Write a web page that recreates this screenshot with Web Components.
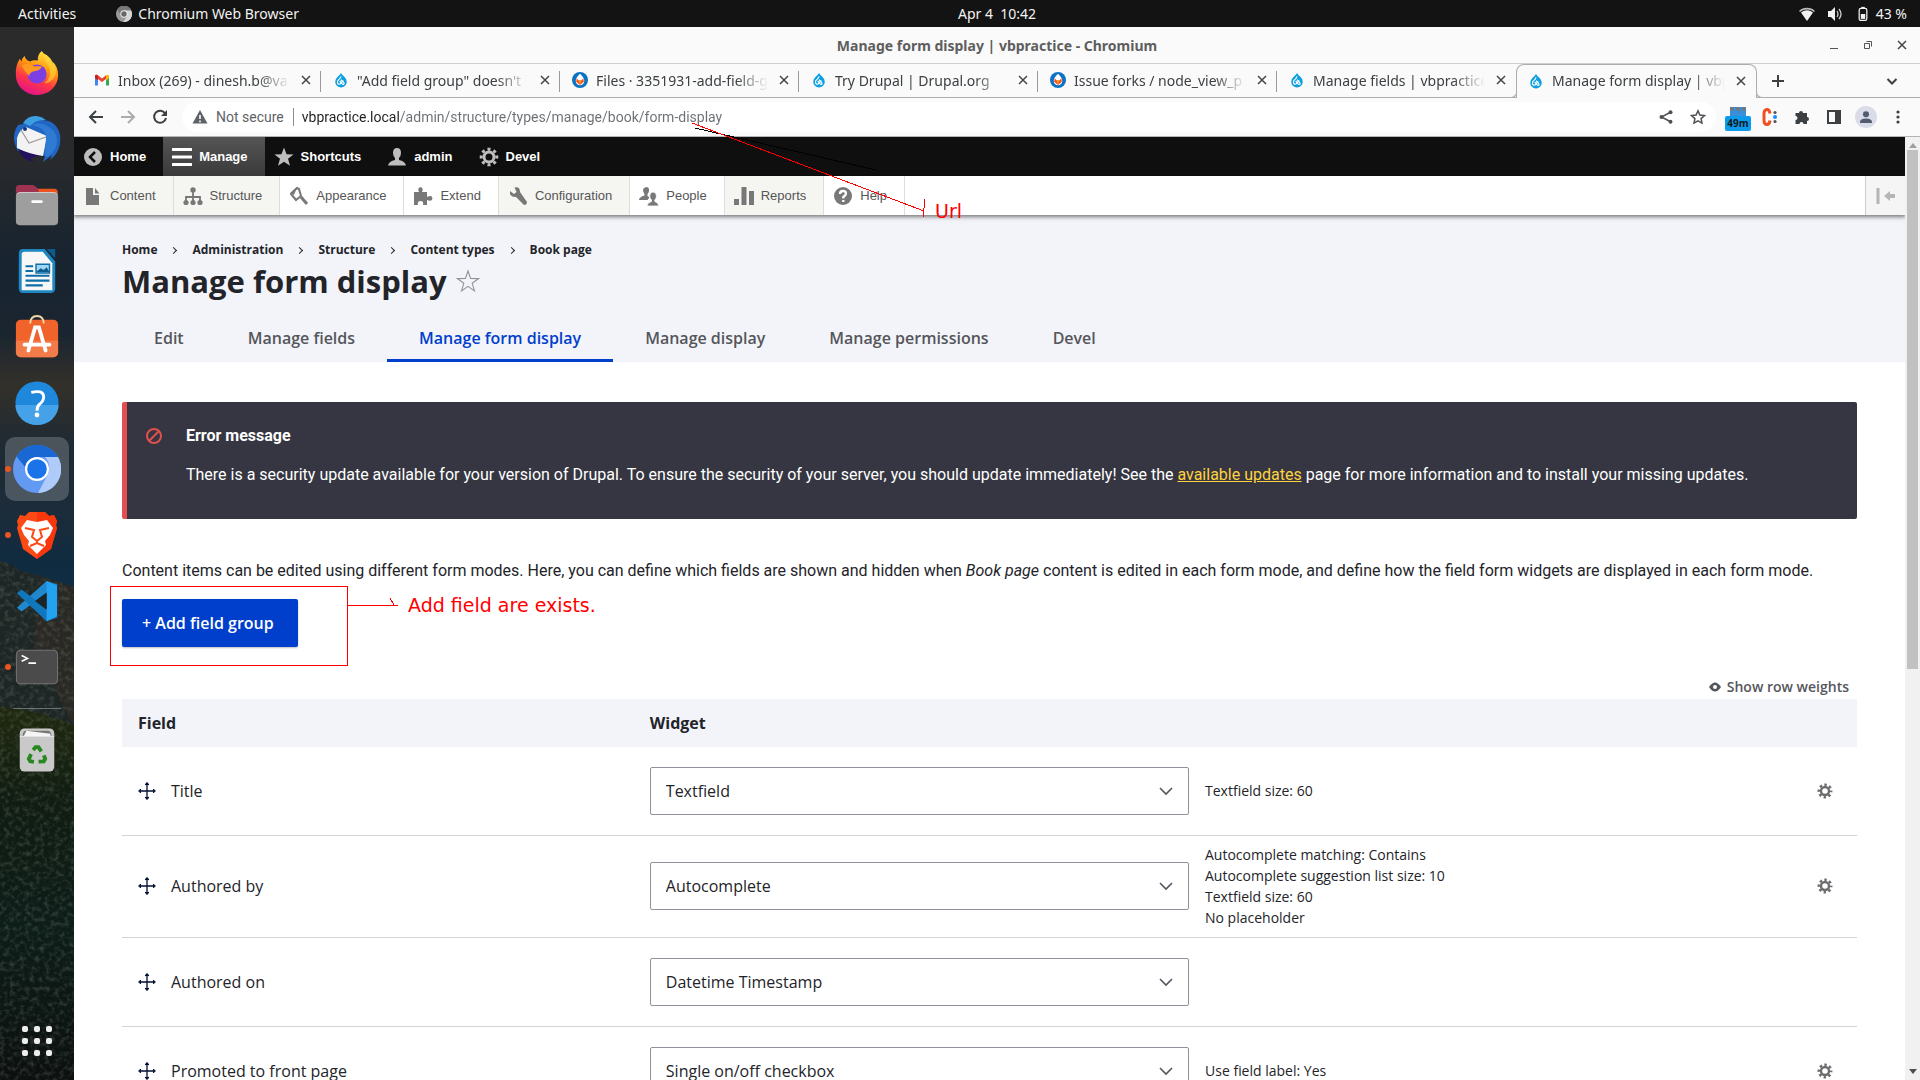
<!DOCTYPE html>
<html lang="en">
<head>
<meta charset="utf-8">
<title>Manage form display | vbpractice</title>
<style>
  html, body {
    margin: 0;
    height: 100%;
    overflow: hidden;
  }

  body {
    --ui-font: "Noto Sans", sans-serif;
    --prose-font: Roboto, "Noto Sans", sans-serif;

    font-family: "Open Sans", "Noto Sans", sans-serif;
    font-size: 16px;
    color: #232429;
  }
</style>
</head>
<body>
<desktop-shell>
  <top-bar slot="top"></top-bar>
  <app-dock slot="dock"></app-dock>
  <browser-window>
    <browser-tab slot="tabs" icon="gmail">Inbox (269) - dinesh.b@va</browser-tab>
    <browser-tab slot="tabs" icon="drupal">"Add field group" doesn't</browser-tab>
    <browser-tab slot="tabs" icon="gitlab">Files · 3351931-add-field-g</browser-tab>
    <browser-tab slot="tabs" icon="drupal">Try Drupal | Drupal.org</browser-tab>
    <browser-tab slot="tabs" icon="gitlab">Issue forks / node_view_p</browser-tab>
    <browser-tab slot="tabs" icon="drupal" last>Manage fields | vbpractice</browser-tab>
    <browser-tab slot="tabs" icon="drupal" active>Manage form display | vbp</browser-tab>

    <admin-toolbar></admin-toolbar>
    <page-header heading="Manage form display"></page-header>
    <page-content>
      <status-message heading="Error message">
        There is a security update available for your version of Drupal. To ensure the security of your server, you should update immediately! See the <a href="#updates">available updates</a> page for more information and to install your missing updates.
      </status-message>
      <p>Content items can be edited using different form modes. Here, you can define which fields are shown and hidden when <em>Book page</em> content is edited in each form mode, and define how the field form widgets are displayed in each form mode.</p>
      <action-button>+ Add field group</action-button>
      <field-table></field-table>
    </page-content>
  </browser-window>
  <markup-layer slot="overlay"></markup-layer>
</desktop-shell>

<script>
const icons = {
  chromeGrey: ['0 0 24 24', '<circle cx="12" cy="12" r="12" fill="#9a9a9a"/><path d="M12 6h11A12 12 0 0 0 2 5l5 9z" fill="#777"/><path d="M23 7H12l5 8-6 9A12 12 0 0 0 23 7" fill="#d5d5d5"/><circle cx="12" cy="12" r="5.5" fill="#eee"/><circle cx="12" cy="12" r="4" fill="#666"/>'],
  wifi: ['0 0 16 16', '<path d="M0 5C4 .8 12 .8 16 5l-1 1C11 2.700 5 2.700 1 6z" fill="#bbb"/><path d="M2 6.500Q8 2 14 6.500L8 15z" fill="#f2f2f2"/>'],
  volume: ['0 0 16 16', '<path d="M1 5h3l4-4v14l-4-4H1z" fill="#f2f2f2"/><path d="M10 5q2 3 0 6M12 3q4 5 0 10" fill="none" stroke="#ccc" stroke-width="1.300"/>'],
  battery: ['0 0 12 18', '<path d="M4 1h4v2H4z" fill="#f2f2f2"/><rect x="1.700" y="2.700" width="8.600" height="13.600" rx="2" fill="none" stroke="#f2f2f2" stroke-width="1.400"/><path d="M3.500 9h5v5.500h-5z" fill="#f2f2f2"/>'],

  minimize: ['0 0 12 12', '<path d="M2 9.500h8" stroke="#555"/>'],
  restore: ['0 0 12 12', '<path d="M2.500 4.500h5v5h-5zM4.500 2.500h5v5" fill="none" stroke="#555"/>'],
  close: ['0 0 12 12', '<path d="M2 2l8 8M10 2l-8 8" stroke="#444" stroke-width="1.500"/>'],
  plus: ['0 0 14 14', '<path d="M7 1v12M1 7h12" stroke="#3c4043" stroke-width="2"/>'],
  tabDown: ['0 0 14 14', '<path d="M2.500 5L7 9.500 11.500 5" fill="none" stroke="#3c4043" stroke-width="2"/>'],
  back: ['0 0 16 16', '<path d="M15 8H2M8 2L2 8l6 6" fill="none" stroke="#3c4043" stroke-width="2"/>'],
  forward: ['0 0 16 16', '<path d="M1 8h13M8 2l6 6-6 6" fill="none" stroke="#aaacae" stroke-width="2"/>'],
  reload: ['0 0 16 16', '<path d="M13.200 4.500A6 6 0 1 0 14 9" fill="none" stroke="#3c4043" stroke-width="2"/><path d="M15 1v6H9z" fill="#3c4043"/>'],
  warning: ['0 0 16 16', '<path d="M8 1l7.500 13.500H.5z" fill="#5f6368"/><path d="M8 6v4M8 11.500v1.700" stroke="#fff" stroke-width="1.600"/>'],
  share: ['0 0 16 16', '<path d="M13 3L3.500 8l9.500 5" fill="none" stroke="#4d5156" stroke-width="1.500"/><circle cx="12.500" cy="3.200" r="2" fill="#4d5156"/><circle cx="3.500" cy="8" r="2" fill="#4d5156"/><circle cx="12.500" cy="12.800" r="2" fill="#4d5156"/>'],
  bookmark: ['0 0 16 16', '<path d="M8 1.800l1.900 4.200 4.600.5-3.400 3.100.9 4.500L8 11.800l-4 2.300.9-4.500-3.400-3.100 4.600-.5z" fill="none" stroke="#4d5156" stroke-width="1.500"/>'],
  crx: ['0 0 16 18', '<path d="M8 5.500Q7.500 1.500 5 1.500 2 1.500 2 6v6q0 4.500 3 4.500 2.500 0 3-4" fill="none" stroke="#f04e23" stroke-width="3"/><g fill="#555"><circle cx="13" cy="4.500" r="1.600"/><circle cx="13" cy="13.500" r="1.600"/></g><circle cx="13" cy="9" r="2" fill="#1a8cff"/>'],
  puzzle: ['0 0 16 16', '<path d="M1.500 4H5a2 2 0 1 1 4 0h4v4a2 2 0 1 1 0 4v3H9.500a2 2 0 1 0-4 0h-4v-4a2 2 0 1 0 0-4z" fill="#3c4043"/>'],
  sidePanel: ['0 0 16 16', '<path d="M2 2h12v12H2z" fill="none" stroke="#3c4043" stroke-width="2"/><path d="M9 2h5v12H9z" fill="#3c4043"/>'],
  avatar: ['0 0 24 24', '<circle cx="12" cy="12" r="12" fill="#dadce8"/><circle cx="12" cy="9" r="3.300" fill="#535b70"/><path d="M5.500 18.500v-1.500q0-3 6.500-3.500 6.500.5 6.500 3.500v1.500z" fill="#535b70"/>'],
  kebab: ['0 0 16 16', '<g fill="#3c4043"><circle cx="8" cy="3" r="1.600"/><circle cx="8" cy="8" r="1.600"/><circle cx="8" cy="13" r="1.600"/></g>'],

  gmail: ['0 0 16 16', '<path d="M1 3.500v10h3V6z" fill="#4285f4"/><path d="M15 3.500v10h-3V6z" fill="#34a853"/><path d="M1 6V3.500Q2 2 4 3.300L8 6.500l4-3.200V7L8 10 4 7v1z" fill="#ea4335"/><path d="M12 3.300Q14 2 15 3.500V6l-3 2.500z" fill="#fbbc04"/><path d="M1 3.500Q1.500 2.500 3 2.800L4 3.500v5L1 6z" fill="#c5221f"/>'],
  drupal: ['0 0 16 18', '<path d="M8 1q1 2 3.500 4.200Q14.500 8 14.500 11a6.500 6.500 0 0 1-13 0Q1.500 8 4.500 5.200 7 3 8 1z" fill="#0c9fe2"/><path d="M8 5q-.5 1.800-2 3-2 1.500-2 3.300 0 2.500 2 2.500.9 0 2-1.500l2.500-3M8 8.500l3 3.300q1 1.300 0 2-1 .5-2-.7L6.500 10" fill="none" stroke="#fff" stroke-width="1.300"/>'],
  gitlab: ['0 0 18 18', '<circle cx="9" cy="9" r="9" fill="#0b72c4"/><path d="M9 2q4.800 4.500 4.800 8a4.800 5 0 0 1-9.600 0Q4.200 6.500 9 2z" fill="#fff"/><path d="M5.300 7l1.700 2h4l1.700-2 .6 4L9 14.500 4.700 11z" fill="#f4511e"/><path d="M7 9h4l-2 5z" fill="#ff9b2e"/>'],

  home: ['0 0 20 20', '<circle cx="10" cy="10" r="9" fill="#bebebe"/><path d="M12 5l-5 5 5 5" fill="none" stroke="#0f0f0f" stroke-width="2.500"/>'],
  menu: ['0 0 20 20', '<path d="M1 2.500h18M1 10h18M1 17.500h18" stroke="#fff" stroke-width="3" stroke-linecap="round"/>'],
  star: ['0 0 20 20', '<path d="M10 .5l2.500 6.700 7 .3-5.500 4.300 2 6.900-6-4-6 4 2-6.900L.5 7.500l7-.3z" fill="#bebebe"/>'],
  user: ['0 0 20 20', '<path d="M10 1q4 0 4 5 0 3-2 5v2q6 1 7 5.500H1Q2 14 8 13v-2Q6 9 6 6q0-5 4-5z" fill="#bebebe"/>'],
  gear: ['0 0 20 20', '<g fill="none" stroke="currentColor"><circle cx="10" cy="10" r="5" stroke-width="3"/><circle cx="10" cy="10" r="7.800" stroke-width="3" pathLength="16" stroke-dasharray="1 1" stroke-dashoffset=".5"/></g>'],
  file: ['0 0 20 20', '<path d="M3 2h7v7h6v10H3z" fill="#787878"/><path d="M12 2l4.500 5.500H12z" fill="#787878"/>'],
  tree: ['0 0 20 20', '<g fill="#787878"><circle cx="10" cy="4" r="2.700"/><circle cx="3" cy="16.500" r="2.600"/><circle cx="10" cy="16.500" r="2.600"/><circle cx="17" cy="16.500" r="2.600"/></g><path d="M10 4v12M3 16v-5h14v5" fill="none" stroke="#787878" stroke-width="1.800"/>'],
  brush: ['0 0 20 20', '<path d="M8 2L2 8l5 6 5-4-2-7z" fill="none" stroke="#787878" stroke-width="2"/><path d="M8 1L1 7l4 2z" fill="#787878"/><path d="M12 11l6 7" stroke="#787878" stroke-width="3"/>'],
  extend: ['0 0 20 20', '<path d="M1 6h5q-2-4 1.500-5Q11 2 9 6h5v5q5-2.500 5.500 1.500Q19 16 14 14v5h-4q1-4-2.500-4T5 19H1z" fill="#787878"/>'],
  wrench: ['0 0 20 20', '<path d="M2 5l4 3 2.500-2-2-4.500Q12 0 12 6l7 10q0 3-3 3L8 11Q1 11 2 5z" fill="#787878"/>'],
  people: ['0 0 20 20', '<path d="M7 1q3.500 0 3 4-.3 2-1.500 3v2l2 1.500-2 2.500H0q0-3 5.500-4.500V8Q4 6 4 4t3-3z" fill="#787878"/><path d="M14 6q3.500 0 3.500 4 0 2.500-1.700 4v1.500q3.700 1 4 4.500H8q.3-3.500 4.500-4.500V14q-1.800-1.500-1.800-4 0-4 3.300-4z" fill="#787878" stroke="#fff" stroke-width=".8"/>'],
  bars: ['0 0 20 20', '<path d="M0 13h5v6H0zM7.500 1h5v18h-5zM15 5h5v14h-5z" fill="#787878"/>'],
  help: ['0 0 20 20', '<circle cx="10" cy="10" r="9" fill="#787878"/><path d="M7 8q0-3 3-3t3 2.500Q13 9 10.300 11v1.500M10.300 14v2" fill="none" stroke="#fff" stroke-width="2.300"/>'],
  collapse: ['0 0 20 16', '<path d="M2 0v16" stroke="#b5b5b5" stroke-width="3"/><path d="M8 8l6-5v3h5v4h-5v3z" fill="#b5b5b5"/>'],

  starOutline: ['0 0 24 24', '<path d="M12 2l2.600 7.400 7.900.2-6.300 4.700 2.300 7.600L12 17.400l-6.500 4.500 2.300-7.600-6.300-4.700 7.900-.2z" fill="none" stroke="#919297" stroke-width="1.100"/>'],
  error: ['0 0 16 16', '<circle cx="8" cy="8" r="7" fill="none" stroke="#e34f4f" stroke-width="2"/><path d="M12.500 3.500l-9 9" stroke="#e34f4f" stroke-width="2"/>'],
  eye: ['0 0 12 12', '<path d="M0 6q6-9 12 0-6 9-12 0z" fill="#55565b"/><circle cx="6" cy="6" r="2" fill="#fff"/>'],
  move: ['0 0 18 18', '<path d="M9 1v16M1 9h16M7 2.500Q8.500 2.500 9 1q.5 1.500 2 1.500M7 15.500q1.500 0 2 1.500.5-1.500 2-1.500M2.500 7Q2.500 8.500 1 9q1.500.5 1.500 2M15.500 7q0 1.500 1.500 2-1.500.5-1.500 2" fill="none" stroke="#000f33" stroke-width="1.300"/>'],
  chevron: ['0 0 14 14', '<path d="M1 4l6 6 6-6" fill="none" stroke="#545560" stroke-width="1.600"/>'],

  firefox: ['0 0 48 48', '<defs><linearGradient id="a" x1=".8" y1="0" x2=".4" y2="1"><stop stop-color="#fff44f"/><stop offset=".4" stop-color="#ff980e"/><stop offset=".7" stop-color="#ff3647"/><stop offset="1" stop-color="#e31587"/></linearGradient></defs><path d="M29 1q-5 4-4 10-5-1-8 1-5-1-6-6-3 3-3 6L6 9Q1 17 2 27a22 20.500 0 0 0 44-1q0-9-6-14l1 4Q38 6 31 4z" fill="url(#a)"/><circle cx="24" cy="25" r="10" fill="#7b3fe4"/><path d="M8 16q7-4 13 1h8q-1 4-7 5-6 1-6 5-5-4-8-11z" fill="#ff9a1f"/><path d="M29 2q4 9 7 14 5 10-4 19 12-3 12-14Q41 8 29 2z" fill="#ffd83a" opacity=".6"/>'],
  thunderbird: ['0 0 48 48', '<path d="M10 9Q15 0 25 2q6-1 5 3 14 1 17 15 2 16-10 25l2-5-9 7 2-6Q20 38 5 36-3 22 5 10z" fill="#2166c2"/><path d="M10 8Q15 0 24 1q5 1 9 4-10-1-16 6z" fill="#3d9ee0"/><path d="M5 34q4 11 16 13l-4-4 12-3z" fill="#23105e"/><path d="M4 23q2-8 9-11l21 9-4 20Q16 39 4 33z" fill="#f3f3f4"/><path d="M8 15l8 13 17-6" fill="none" stroke="#999" stroke-width="1.200"/><path d="M18 10q14 2 15 12l-1 19 3 1q12-10 8-22-5-10-18-12z" fill="#2f7ad2"/><circle cx="12" cy="14" r="2" fill="#123a78"/>'],
  files: ['0 0 48 48', '<path d="M2 12V7q0-4 4-4h14l5 4h17q4 0 4 5z" fill="#e95420"/><path d="M2 12V7q0-4 4-4h14l5 4 1 4z" fill="#77216f" opacity=".65"/><rect x="2" y="11" width="44" height="34" rx="4" fill="#9e9e9e"/><path d="M3 13q1-2 3-2h36q2 0 3 2" stroke="#d0d0d0" fill="none"/><rect x="18" y="19" width="12" height="3" rx="1.500" fill="#fff"/>'],
  writer: ['0 0 48 48', '<path d="M9 1h23l11 13v28q0 5-5 5H9q-4 0-4-5V6q0-5 4-5z" fill="#1d87c2"/><path d="M34 1h9v10z" fill="#0b5c8c"/><path d="M11 4h19l10 12v28H8V7q0-3 3-3z" fill="#f7f7f7"/><path d="M12 19h8M12 24h8M12 29h25M12 34h25M12 39h18" stroke="#0d6ea8" stroke-width="2.200"/><path d="M23 17h14v9H23z" fill="#9fd7f5" stroke="#0d6ea8" stroke-width="1.500"/><path d="M23 25l5-4 3 2 3-3 3 5z" fill="#0d5c8e"/>'],
  software: ['0 0 48 48', '<rect x="2" y="6" width="44" height="39" rx="5" fill="#f0642c"/><path d="M2 28h44v12q0 5-5 5H7q-5 0-5-5z" fill="#f27b49"/><path d="M17 10q0-8 7-8t7 8" fill="none" stroke="#f1d5a8" stroke-width="2"/><path d="M15 38l7-24h4l7 24M11 32h26" fill="none" stroke="#fff" stroke-width="4" stroke-linecap="round"/>'],
  helpApp: ['0 0 48 48', '<circle cx="24" cy="24" r="22.500" fill="#1e88dd"/><path d="M1.500 26h45a22.500 21 0 0 1-45 0z" fill="#45a2e8"/><path d="M18 13q12-3 13 4 0 5-4 8-3 2-3 7" fill="none" stroke="#fff" stroke-width="3"/><circle cx="24" cy="36.500" r="2.500" fill="#fff"/>'],
  chromium: ['0 0 48 48', '<circle cx="24" cy="24" r="24" fill="#6299f3"/><path d="M3.500 11.500A24 24 0 0 1 45 12H24q-9 0-12 10z" fill="#1967d2"/><path d="M45 12a24 24 0 0 1-20 36l9.500-18Q39 20 32 12z" fill="#aecbfa"/><circle cx="24" cy="24" r="12" fill="#fff"/><circle cx="24" cy="24" r="9.800" fill="#1a73e8"/>'],
  brave: ['0 0 48 48', '<path d="M16 1h16l4 4 5-1 3 6-1 4 1 3-6 21-14 10-14-10L4 17l1-3-1-4 3-6 5 1z" fill="#fb4a14"/><path d="M32 1l4 4 5-1 3 6-1 4 1 3-6 21-14 10V1z" fill="#fa2d0a" opacity=".7"/><path d="M14 9l10 2 10-2 6 8-3 7-5 6 1 4-9 9-9-9 1-4-5-6-3-7z" fill="#fff"/><path d="M12 17l9 2-2 7 5 4 5-4-2-7 9-2M17 35l7-3 7 3M24 30v3" fill="none" stroke="#fb4a14" stroke-width="2"/>'],
  vscode: ['0 0 48 48', '<path d="M34 3L3 31l5 4L46 7z" fill="#2188d0"/><path d="M34 45L3 16l5-4 38 29z" fill="#1177bd"/><path d="M34 3l11 5v32l-11 5z" fill="#24a2f2"/><path d="M34 15v18L22 24z" fill="#1b2426"/>'],
  terminal: ['0 0 48 48', '<rect x="2.500" y="6.500" width="43" height="35" rx="4" fill="#4b4b4b" stroke="#777"/><path d="M8 12l6 3-6 3M15 20h8" fill="none" stroke="#fff" stroke-width="1.700"/>'],
  trash: ['0 0 48 48', '<rect x="6" y="1.500" width="36" height="45" rx="5" fill="#c9c9c9"/><path d="M9 9q0-5 4-5h22q4 0 4 5z" fill="#777"/><path d="M10 10l3-6 25 3v3z" fill="#f5f5f5"/><path d="M6 10h36" stroke="#e4e4e4"/><g fill="none" stroke="#26881f" stroke-width="4"><path id="r" d="M20 24l2.500-3h3l3 4.500"/><use href="#r" transform="rotate(120 24 30)"/><use href="#r" transform="rotate(240 24 30)"/></g>'],
  grid: ['0 0 32 32', '<g fill="#ededed"><rect width="6" height="6" rx="2" x="1" y="1"/><rect width="6" height="6" rx="2" x="13" y="1"/><rect width="6" height="6" rx="2" x="25" y="1"/><rect width="6" height="6" rx="2" x="1" y="13"/><rect width="6" height="6" rx="2" x="13" y="13"/><rect width="6" height="6" rx="2" x="25" y="13"/><rect width="6" height="6" rx="2" x="1" y="25"/><rect width="6" height="6" rx="2" x="13" y="25"/><rect width="6" height="6" rx="2" x="25" y="25"/></g>']
};

// Gives an element its open shadow root and fills it.
class BaseElement extends HTMLElement {
  constructor() {
    super();
    this.attachShadow({ mode: 'open' });
  }

  connectedCallback() {
    const template = document.createElement('template');
    template.innerHTML = this.render();
    this.shadowRoot.replaceChildren(template.content.cloneNode(true));
  }
}

class UiIcon extends BaseElement {
  render() {
    const [ box, body ] = icons[this.getAttribute('name')];
    const size = this.getAttribute('size') || 16;
    return `
      <style>
        :host { display: inline-flex; flex: none; }
        svg { display: block; width: ${size}px; height: ${size}px; }
      </style>
      <svg viewBox="${box}" aria-hidden="true">${body}</svg>`;
  }
}

class DesktopShell extends BaseElement {
  render() {
    return `
      <style>
        :host {
          display: grid;
          grid-template: auto minmax(0, 1fr) / auto minmax(0, 1fr);
          height: 100vh;
          position: relative;
          overflow: hidden;
        }
        slot[name="top"]::slotted(*) { grid-column: 1 / -1; }
      </style>
      <slot name="top"></slot>
      <slot name="dock"></slot>
      <slot></slot>
      <slot name="overlay"></slot>`;
  }
}

class TopBar extends BaseElement {
  render() {
    return `
      <style>
        :host {
          display: grid;
          grid-template-columns: 74px 1fr auto 1fr;
          align-items: center;
          height: 27px;
          background: #131313;
          color: #f2f2f2;
          font: 14px var(--ui-font);
          white-space: pre;
        }
        .left, .right { display: flex; align-items: center; }
        .left { grid-column: 1 / 3; gap: 40px; padding-left: 18px; }
        .app { display: flex; align-items: center; gap: 6px; }
        .right { justify-content: flex-end; gap: 12px; padding-right: 13px; }
        .battery { display: flex; align-items: center; gap: 5px; }
      </style>
      <div class="left">
        <span>Activities</span>
        <span class="app"><ui-icon name="chromeGrey"></ui-icon>Chromium Web Browser</span>
      </div>
      <time>Apr 4  10:42</time>
      <div class="right">
        <ui-icon name="wifi"></ui-icon>
        <ui-icon name="volume"></ui-icon>
        <span class="battery"><ui-icon name="battery"></ui-icon>43 %</span>
      </div>`;
  }
}

class DockItem extends BaseElement {
  render() {
    return `
      <style>
        :host {
          display: grid;
          place-items: center;
          width: 64px;
          height: 64px;
          margin: 1px 5px;
          border-radius: 10px;
          position: relative;
        }
        :host([active]) { background: rgba(255, 255, 255, .2); }
        :host([running])::before {
          content: '';
          position: absolute;
          left: 0;
          top: 29px;
          width: 6px;
          height: 6px;
          border-radius: 50%;
          background: #e95420;
        }
        button { display: flex; padding: 0; border: 0; background: none; }
      </style>
      <button aria-label="${this.getAttribute('label')}">
        <ui-icon name="${this.getAttribute('icon')}" size="${this.getAttribute('size') || 46}"></ui-icon>
      </button>`;
  }
}

class AppDock extends BaseElement {
  render() {
    return `
      <style>
        :host {
          display: flex;
          flex-direction: column;
          padding: 13px 0 6px;
          position: relative;
          background: linear-gradient(#2c2b2c, #292a2c 12%, #182430 22%, #1a2530 29%, #33302a 34%, #1e2a34 40%, #1c2c3a 46%, #0f2b40 51%, #123048 56%);
        }
        .hills { position: absolute; inset: 0; width: 100%; height: 100%; }
        hr { box-sizing: border-box; width: 48px; margin: 8px auto; border: 0; border-top: 1px solid #6c7270; position: relative; }
        .apps { margin-top: auto; }
      </style>
      <svg class="hills" viewBox="0 0 74 1053" preserveAspectRatio="none" aria-hidden="true">
        <defs>
          <linearGradient id="wood" x1="0" y1="0" x2="0" y2="1">
            <stop stop-color="#20290f"/><stop offset=".25" stop-color="#101c12"/><stop offset=".6" stop-color="#0d1d19"/><stop offset="1" stop-color="#0c100f"/>
          </linearGradient>
          <filter id="leaves" x="0" y="0" width="100%" height="100%">
            <feTurbulence type="fractalNoise" baseFrequency=".2" numOctaves="3"/>
            <feColorMatrix values="0 0 0 0 .2  0 0 0 0 .24  0 0 0 0 .18  0 .8 0 0 -.36"/>
            <feComposite in2="SourceGraphic" operator="in"/>
          </filter>
        </defs>
        <path d="M0 534q12 2 20 10 22 4 54 16v493H0z" fill="#1d2625"/>
        <path d="M40 552l34 8v140l-40-80z" fill="#292824"/>
        <path d="M0 680q40 4 74 18v355H0z" fill="url(#wood)"/>
        <path d="M0 534q12 2 20 10 22 4 54 16v493H0z" filter="url(#leaves)"/>
      </svg>
      <dock-item icon="firefox" label="Firefox"></dock-item>
      <dock-item icon="thunderbird" label="Thunderbird" size="48"></dock-item>
      <dock-item icon="files" label="Files"></dock-item>
      <dock-item icon="writer" label="LibreOffice Writer"></dock-item>
      <dock-item icon="software" label="Ubuntu Software"></dock-item>
      <dock-item icon="helpApp" label="Help"></dock-item>
      <dock-item icon="chromium" label="Chromium" size="48" active running></dock-item>
      <dock-item icon="brave" label="Brave" size="48" running></dock-item>
      <dock-item icon="vscode" label="Visual Studio Code"></dock-item>
      <dock-item icon="terminal" label="Terminal" running></dock-item>
      <hr>
      <dock-item icon="trash" label="Trash"></dock-item>
      <dock-item class="apps" icon="grid" label="Show applications" size="32"></dock-item>`;
  }
}

class BrowserTab extends BaseElement {
  render() {
    return `
      <style>
        :host {
          box-sizing: border-box;
          display: flex;
          align-items: center;
          gap: 8px;
          flex: 0 1 239px;
          min-width: 0;
          padding: 0 7px 2px 12px;
          position: relative;
          border-top: 1px solid transparent;
        }
        :host(:not([active]):not([last]))::after {
          content: '';
          position: absolute;
          right: 0;
          top: 6px;
          height: 21px;
          border-right: 1px solid #9a9a9a;
        }
        :host([active]) {
          flex-basis: 241px;
          padding-left: 11px;
          border: 1px solid #adadad;
          border-bottom: 0;
          border-radius: 8px 8px 0 0;
          margin-bottom: -1px;
          background: #fafafa;
        }
        .foot { display: none; }
        :host([active]) .foot {
          display: block;
          position: absolute;
          bottom: 0;
          width: 6px;
          height: 6px;
          border-bottom: 1px solid #adadad;
          background: #fafafa;
        }
        .foot.start { right: 100%; border-right: 1px solid #adadad; border-radius: 0 0 6px 0; }
        .foot.end { left: 100%; border-left: 1px solid #adadad; border-radius: 0 0 0 6px; }
        .title {
          flex: 1;
          min-width: 0;
          overflow: hidden;
          white-space: nowrap;
          font: 14px var(--ui-font);
          color: #3c4043;
          mask-image: linear-gradient(90deg, #000 calc(100% - 32px), transparent);
        }
        button { display: flex; padding: 2px; border: 0; background: none; }
      </style>
      <ui-icon name="${this.getAttribute('icon')}"></ui-icon>
      <span class="title"><slot></slot></span>
      <button aria-label="Close tab"><ui-icon name="close" size="12"></ui-icon></button>
      <span class="foot start"></span><span class="foot end"></span>`;
  }
}

class BrowserWindow extends BaseElement {
  render() {
    return `
      <style>
        :host {
          display: flex;
          flex-direction: column;
          min-height: 0;
          background: #fafafa;
        }
        button { display: flex; padding: 0; border: 0; background: none; }
        .titlebar {
          display: grid;
          grid-template-columns: 1fr auto 1fr;
          align-items: center;
          height: 36px;
          padding: 0 12px;
          border-bottom: 1px solid #d0d0d0;
          font: 700 14px var(--ui-font);
          color: #5e5e5e;
        }
        .controls { grid-column: 3; display: flex; justify-content: flex-end; gap: 22px; }
        .titlebar span { grid-column: 2; }
        .tabs {
          display: flex;
          height: 33px;
          padding-left: 8px;
          border-bottom: 1px solid #adadad;
        }
        .new { align-self: center; margin-left: 14px; }
        .list { align-self: center; margin: 0 21px 0 auto; }
        .tools {
          display: flex;
          align-items: center;
          height: 38px;
          padding: 0 6px;
          border-bottom: 1px solid #b5b5b5;
        }
        .tools button { justify-content: center; width: 32px; }
        .omnibox {
          flex: 1;
          display: flex;
          align-items: center;
          gap: 8px;
          height: 30px;
          margin: 0 6px;
          padding: 0 2px 0 10px;
          border-radius: 15px;
          background: #fff;
          font: 14px var(--prose-font);
          color: #5f6368;
        }
        .omnibox > span { padding-right: 9px; border-right: 1px solid #8a8d91; line-height: 18px; }
        input {
          flex: 1;
          min-width: 0;
          padding: 0;
          border: 0;
          outline: 0;
          font: inherit;
          color: transparent;
          /* host name dark, path grey */
          background: linear-gradient(90deg, #202124 97px, #6b6f74 97px) text;
        }
        .stars { display: flex; }
        .tools .timer { flex-direction: column; align-items: center; padding-top: 4px; }
        .timer i { width: 16px; height: 9px; background: #3a8fd8; border-top: 4px dotted #777; box-sizing: border-box; }
        .timer b {
          width: 26px;
          border-radius: 2px;
          background: #0c9aea;
          color: #101820;
          font: bold 10px/15px "Open Sans", sans-serif;
          text-align: center;
        }
        .view { flex: 1; display: flex; min-height: 0; }
        .page { flex: 1; min-width: 0; overflow: hidden; background: #fff; }
        .scroll {
          display: flex;
          flex-direction: column;
          align-items: center;
          width: 15px;
          background: #f1f1f1;
        }
        .scroll::before, .scroll::after { content: ''; border: 4px solid transparent; }
        .scroll::before { margin: 2px 0; border-bottom: 5px solid #a0a0a0; }
        .scroll::after { margin: auto 0 2px; border-top: 5px solid #505050; }
        .thumb { width: 11px; height: 55%; background: #c1c1c1; }
      </style>
      <div class="titlebar">
        <span>Manage form display | vbpractice - Chromium</span>
        <div class="controls">
          <button aria-label="Minimize"><ui-icon name="minimize" size="12"></ui-icon></button>
          <button aria-label="Restore"><ui-icon name="restore" size="12"></ui-icon></button>
          <button aria-label="Close"><ui-icon name="close" size="12"></ui-icon></button>
        </div>
      </div>
      <div class="tabs">
        <slot name="tabs"></slot>
        <button class="new" aria-label="New tab"><ui-icon name="plus" size="14"></ui-icon></button>
        <button class="list" aria-label="Search tabs"><ui-icon name="tabDown" size="14"></ui-icon></button>
      </div>
      <div class="tools">
        <button aria-label="Back"><ui-icon name="back"></ui-icon></button>
        <button aria-label="Forward"><ui-icon name="forward"></ui-icon></button>
        <button aria-label="Reload"><ui-icon name="reload"></ui-icon></button>
        <div class="omnibox">
          <ui-icon name="warning"></ui-icon>
          <span>Not secure</span>
          <input aria-label="Address" value="vbpractice.local/admin/structure/types/manage/book/form-display">
          <div class="stars">
            <button aria-label="Share"><ui-icon name="share"></ui-icon></button>
            <button aria-label="Bookmark"><ui-icon name="bookmark"></ui-icon></button>
          </div>
        </div>
        <button aria-label="Timer" class="timer"><i></i><b>49m</b></button>
        <button aria-label="Extension"><ui-icon name="crx" size="18"></ui-icon></button>
        <button aria-label="Extensions"><ui-icon name="puzzle"></ui-icon></button>
        <button aria-label="Side panel"><ui-icon name="sidePanel"></ui-icon></button>
        <button aria-label="Profile"><ui-icon name="avatar" size="22"></ui-icon></button>
        <button aria-label="Menu"><ui-icon name="kebab"></ui-icon></button>
      </div>
      <div class="view">
        <div class="page"><slot></slot></div>
        <div class="scroll"><div class="thumb"></div></div>
      </div>`;
  }
}

class AdminToolbar extends BaseElement {
  render() {
    const bar = [
      [ 'home', 'Home' ], [ 'menu', 'Manage' ], [ 'star', 'Shortcuts' ], [ 'user', 'admin' ], [ 'gear', 'Devel' ]
    ];
    const tray = [
      [ 'file', 'Content', 1 ], [ 'tree', 'Structure', 1 ], [ 'brush', 'Appearance' ], [ 'extend', 'Extend' ],
      [ 'wrench', 'Configuration', 1 ], [ 'people', 'People' ], [ 'bars', 'Reports', 1 ], [ 'help', 'Help' ]
    ];
    const link = ([ icon, text, tint ]) => `
      <a href="#${text}" class="${tint ? 'tint' : ''}"><ui-icon name="${icon}" size="20"></ui-icon>${text}</a>`;
    return `
      <style>
        :host {
          display: block;
          position: relative;
          font: 13px "Liberation Sans", sans-serif;
        }
        nav { display: flex; height: 39px; }
        a {
          display: flex;
          align-items: center;
          gap: 7px;
          padding: 0 17px 0 9px;
          text-decoration: none;
          color: inherit;
        }
        .bar { background: #0f0f0f; color: #fff; font-weight: bold; }
        .bar a:nth-child(2) { background: linear-gradient(#555, #3a3a3a); }
        .bar ui-icon { color: #bebebe; }
        .tray { background: #fff; color: #565656; box-shadow: 0 1px 4px 1px rgba(0, 0, 0, .5); }
        .tray a { border-right: 1px solid #ddd; }
        .tint { background: #f5f5f2; }
        button {
          width: 40px;
          margin-left: auto;
          padding: 0;
          display: grid;
          place-items: center;
          border: 0;
          border-left: 1px solid #ccc;
          background: #f5f5f5;
        }
      </style>
      <nav class="bar">${bar.map(link).join('')}</nav>
      <nav class="tray">
        ${tray.map(link).join('')}
        <button aria-label="Vertical orientation"><ui-icon name="collapse" size="20"></ui-icon></button>
      </nav>`;
  }
}

class PageHeader extends BaseElement {
  render() {
    const crumbs = [ 'Home', 'Administration', 'Structure', 'Content types', 'Book page' ];
    const tabs = [ 'Edit', 'Manage fields', 'Manage form display', 'Manage display', 'Manage permissions', 'Devel' ];
    const heading = this.getAttribute('heading');
    return `
      <style>
        :host { display: block; padding: 24px 48px 0; background: #f3f4f9; }
        a { color: inherit; text-decoration: none; }
        ol { display: flex; margin: 0; padding: 0; list-style: none; font-size: 12px; font-weight: 700; line-height: 21px; }
        li + li::before {
          content: '';
          display: inline-block;
          width: 4px;
          height: 4px;
          margin: 0 16px 1px 14px;
          border: solid #232429;
          border-width: 1px 1px 0 0;
          rotate: 45deg;
        }
        .title { display: flex; align-items: center; gap: 9px; margin-bottom: 12px; }
        h1 { margin: 0; font-size: 31px; font-weight: 700; line-height: 42px; }
        button { display: flex; padding: 0; border: 0; background: none; }
        .tabs { display: flex; font-weight: 600; color: #55565b; }
        .tabs a { padding: 0 32px; line-height: 48px; }
        .tabs .active { color: #003ecc; box-shadow: inset 0 -3px #003ecc; }
      </style>
      <nav aria-label="Breadcrumb"><ol>${crumbs.map(c => `<li><a href="#crumb">${c}</a></li>`).join('')}</ol></nav>
      <div class="title">
        <h1>${heading}</h1>
        <button aria-label="Add to shortcuts"><ui-icon name="starOutline" size="24"></ui-icon></button>
      </div>
      <nav class="tabs" aria-label="Primary tabs">
        ${tabs.map(t => `<a href="#tab" class="${t === heading ? 'active' : ''}">${t}</a>`).join('')}
      </nav>`;
  }
}

class PageContent extends BaseElement {
  render() {
    return `
      <style>
        :host { display: block; padding: 40px 48px; line-height: 24px; }
        ::slotted(p) { margin: 40px 0 16px; font: 16px/24px var(--prose-font); }
      </style>
      <slot></slot>`;
  }
}

class StatusMessage extends BaseElement {
  render() {
    return `
      <style>
        :host {
          display: grid;
          grid-template-columns: 16px 1fr;
          column-gap: 24px;
          row-gap: 15px;
          align-items: center;
          padding: 22px 20px 32px 19px;
          border-left: 5px solid #e34f4f;
          border-radius: 2px;
          background: #353641;
          color: #fff;
          font: 16px/24px var(--prose-font);
        }
        h2 { margin: 0; font-size: 16px; font-weight: 700; }
        div { grid-column: 2; }
        ::slotted(a) { color: #ffd23f; }
      </style>
      <ui-icon name="error"></ui-icon>
      <h2>${this.getAttribute('heading')}</h2>
      <div><slot></slot></div>`;
  }
}

class ActionButton extends BaseElement {
  render() {
    return `
      <style>
        :host { display: block; }
        button {
          height: 48px;
          padding: 0 24px 0 20px;
          border: 0;
          border-radius: 2px;
          background: #003ecc;
          color: #fff;
          font: inherit;
          font-weight: 600;
          box-shadow: 0 1px 2px rgba(0, 0, 0, .25);
        }
      </style>
      <button><slot></slot></button>`;
  }
}

class FieldTable extends BaseElement {
  get rows() {
    return [
      { field: 'Title', widget: 'Textfield', summary: [ 'Textfield size: 60' ] },
      {
        field: 'Authored by',
        widget: 'Autocomplete',
        summary: [ 'Autocomplete matching: Contains', 'Autocomplete suggestion list size: 10', 'Textfield size: 60', 'No placeholder' ]
      },
      { field: 'Authored on', widget: 'Datetime Timestamp', summary: [] },
      { field: 'Promoted to front page', widget: 'Single on/off checkbox', summary: [ 'Use field label: Yes' ] }
    ];
  }

  renderRow({ field, widget, summary }, i) {
    return `
      <tr>
        <td><div class="field"><ui-icon name="move" size="18"></ui-icon><label for="w${i}">${field}</label></div></td>
        <td class="widget"><div class="select">
          <select id="w${i}"><option>${widget}</option></select>
          <ui-icon name="chevron" size="14"></ui-icon>
        </div></td>
        <td class="summary">${summary.join('<br>')}</td>
        <td class="edit">${summary.length ? '<button aria-label="Edit"><ui-icon name="gear" size="16"></ui-icon></button>' : ''}</td>
      </tr>`;
  }

  render() {
    return `
      <style>
        :host { display: block; margin-top: 28px; }
        .weights {
          display: flex;
          align-items: center;
          gap: 6px;
          margin-left: auto;
          padding: 0 8px 0 0;
          border: 0;
          background: none;
          font: inherit;
          font-size: 14px;
          font-weight: 600;
          line-height: 24px;
          color: #55565b;
        }
        table { width: 100%; table-layout: fixed; border-spacing: 0; }
        .c1 { width: 29.5%; }
        .c2 { width: 32%; }
        .c4 { width: 64px; }
        th { height: 48px; padding: 0 16px; background: #f3f4f9; text-align: left; font-weight: 700; }
        td { height: 71px; padding: 8px 16px 9px; border-bottom: 1px solid #d3d4d9; }
        .field { display: flex; align-items: center; gap: 15px; }
        td.widget { padding-right: 0; }
        .select { display: grid; align-items: center; }
        .select > * { grid-area: 1 / 1; }
        .select ui-icon { justify-self: end; margin-right: 16px; pointer-events: none; }
        select {
          appearance: none;
          width: 100%;
          height: 48px;
          padding: 0 15px;
          border: 1px solid #8e929c;
          border-radius: 2px;
          background: #fff;
          font: inherit;
          color: inherit;
        }
        .summary { font-size: 14px; line-height: 21px; }
        .edit button { display: grid; place-items: center; width: 32px; height: 32px; padding: 0; border: 0; background: none; color: #6b6c70; }
      </style>
      <button class="weights"><ui-icon name="eye" size="12"></ui-icon>Show row weights</button>
      <table>
        <colgroup><col class="c1"><col class="c2"><col><col class="c4"></colgroup>
        <thead><tr><th>Field</th><th>Widget</th><th></th><th></th></tr></thead>
        <tbody>${this.rows.map(this.renderRow).join('')}</tbody>
      </table>`;
  }
}

// Red notes drawn over the desktop.
class MarkupLayer extends BaseElement {
  render() {
    return `
      <style>
        :host {
          display: block;
          position: absolute;
          inset: 0;
          pointer-events: none;
          font: 19px/24px "DejaVu Sans", sans-serif;
          color: #f00;
        }
        svg { position: absolute; overflow: visible; fill: none; stroke: #f00; }
        span { position: absolute; white-space: nowrap; }
        .url { left: 935px; top: 199px; }
        .add { left: 408px; top: 593px; }
      </style>
      <svg width="1" height="1" aria-hidden="true" shape-rendering="crispEdges">
        <path d="M695 128L876 170" stroke="#000"/>
        <path d="M692 123L924 211M925 199L923 217"/>
        <path d="M110.500 586.500h237v79h-237zM348 605.500h50M390 598l4 7"/>
      </svg>
      <span class="url">Url</span>
      <span class="add">Add field are exists.</span>`;
  }
}

customElements.define('ui-icon', UiIcon);
customElements.define('desktop-shell', DesktopShell);
customElements.define('top-bar', TopBar);
customElements.define('dock-item', DockItem);
customElements.define('app-dock', AppDock);
customElements.define('browser-tab', BrowserTab);
customElements.define('browser-window', BrowserWindow);
customElements.define('admin-toolbar', AdminToolbar);
customElements.define('page-header', PageHeader);
customElements.define('page-content', PageContent);
customElements.define('status-message', StatusMessage);
customElements.define('action-button', ActionButton);
customElements.define('field-table', FieldTable);
customElements.define('markup-layer', MarkupLayer);
</script>
</body>
</html>
